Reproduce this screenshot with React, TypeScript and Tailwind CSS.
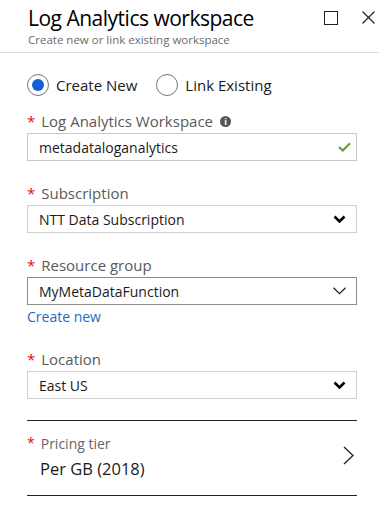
import React from 'react'

const font = { fontFamily: '"Open Sans", "Noto Sans", sans-serif' }

function Label({ text, info }: { text: string; info?: boolean }) {
  return (
    <div className="flex items-center h-[24px] text-[15px] text-[#595959]">
      <span className="text-[#e00b1c] text-[15px] mr-[6px] leading-none">*</span>
      <span>{text}</span>
      {info && (
        <span className="ml-[7px] w-[11px] h-[11px] rounded-full bg-[#555] text-white text-[9px] font-bold leading-none flex items-center justify-center">
          i
        </span>
      )}
    </div>
  )
}

function BoldChevron() {
  return (
    <svg width="13" height="9" viewBox="0 0 13 9" className="text-black">
      <path d="M1.5 1.5 L6.5 6.5 L11.5 1.5" fill="none" stroke="currentColor" strokeWidth={2.6} />
    </svg>
  )
}

function ThinChevron() {
  return (
    <svg width="13" height="8" viewBox="0 0 13 8" className="text-[#222]">
      <path d="M0.5 0.7 L6.5 6.7 L12.5 0.7" fill="none" stroke="currentColor" strokeWidth={1.3} />
    </svg>
  )
}

function Select({ value, dark, thin }: { value: string; dark?: boolean; thin?: boolean }) {
  return (
    <div
      className={`flex items-center justify-between h-[28px] border pl-[11px] pr-[10px] text-[14px] text-[#1a1a1a] ${
        dark ? 'border-[#8c8c8c]' : 'border-[#d0d0d0]'
      }`}
    >
      <span>{value}</span>
      {thin ? <ThinChevron /> : <BoldChevron />}
    </div>
  )
}

export default function App() {
  return (
    <div className="w-[379px] h-[515px] bg-white overflow-hidden" style={font}>
      {/* header */}
      <div className="border-b border-[#dcdcdc] h-[53px] flex justify-between pl-[28px] pr-[4px]">
        <div>
          <div className="text-[21px] leading-[28px] pt-[4px] text-black tracking-[-0.5px]">Log Analytics workspace</div>
          <div className="text-[11.5px] leading-[15px] text-[#6b6b6b]">Create new or link existing workspace</div>
        </div>
        <div className="flex gap-[24px] pt-[11px]">
          <div className="w-[14px] h-[14px] border border-[#222]" />
          <svg width="13" height="13" viewBox="0 0 13 13">
            <path d="M0.5 0.5 L12.5 12.5 M12.5 0.5 L0.5 12.5" stroke="#222" strokeWidth={1.2} />
          </svg>
        </div>
      </div>

      <div className="pl-[27px] pr-[22px]">
        {/* radios */}
        <div className="flex items-center mt-[21px] h-[22px] text-[15px] text-[#1a1a1a]">
          <div className="w-[22px] h-[22px] rounded-full border border-[#777] flex items-center justify-center">
            <div className="w-[12px] h-[12px] rounded-full bg-[#1160d4]" />
          </div>
          <span className="ml-[7px]">Create New</span>
          <div className="ml-[19px] w-[22px] h-[22px] rounded-full border border-[#777]" />
          <span className="ml-[7px]">Link Existing</span>
        </div>

        <div className="mt-[13px]">
          <Label text="Log Analytics Workspace" info />
        </div>
        <div className="flex items-center justify-between h-[28px] border border-[#c8c8c8] pl-[11px] pr-[5px] text-[14px] text-[#1a1a1a]">
          <span>metadataloganalytics</span>
          <svg width="13" height="10" viewBox="0 0 13 10">
            <path d="M1 5 L4.8 8.5 L12 1.2" fill="none" stroke="#5c9f2c" strokeWidth={2} />
          </svg>
        </div>

        <div className="mt-[20px]">
          <Label text="Subscription" />
        </div>
        <Select value="NTT Data Subscription" />

        <div className="mt-[20px]">
          <Label text="Resource group" />
        </div>
        <Select value="MyMetaDataFunction" dark thin />
        <div className="text-[14px] text-[#1a6dc5] leading-[20px] mt-[2px]">Create new</div>

        <div className="mt-[20px]">
          <Label text="Location" />
        </div>
        <Select value="East US" />

        {/* pricing tier */}
        <div className="mt-[21px] border-t border-b border-[#222] h-[76px] flex items-start justify-between">
          <div className="pt-[12px]">
            <div className="flex items-center text-[14px] text-[#666] h-[20px]">
              <span className="text-[#e00b1c] mr-[6px] leading-none">*</span>
              <span>Pricing tier</span>
            </div>
            <div className="text-[16.5px] text-[#1a1a1a] leading-[24px] mt-[4px] pl-[13px]">Per GB (2018)</div>
          </div>
          <svg width="11" height="19" viewBox="0 0 11 19" className="mr-[3px] mt-[25px]">
            <path d="M1 1 L10 9.5 L1 18" fill="none" stroke="#222" strokeWidth={1.3} />
          </svg>
        </div>
      </div>
    </div>
  )
}
